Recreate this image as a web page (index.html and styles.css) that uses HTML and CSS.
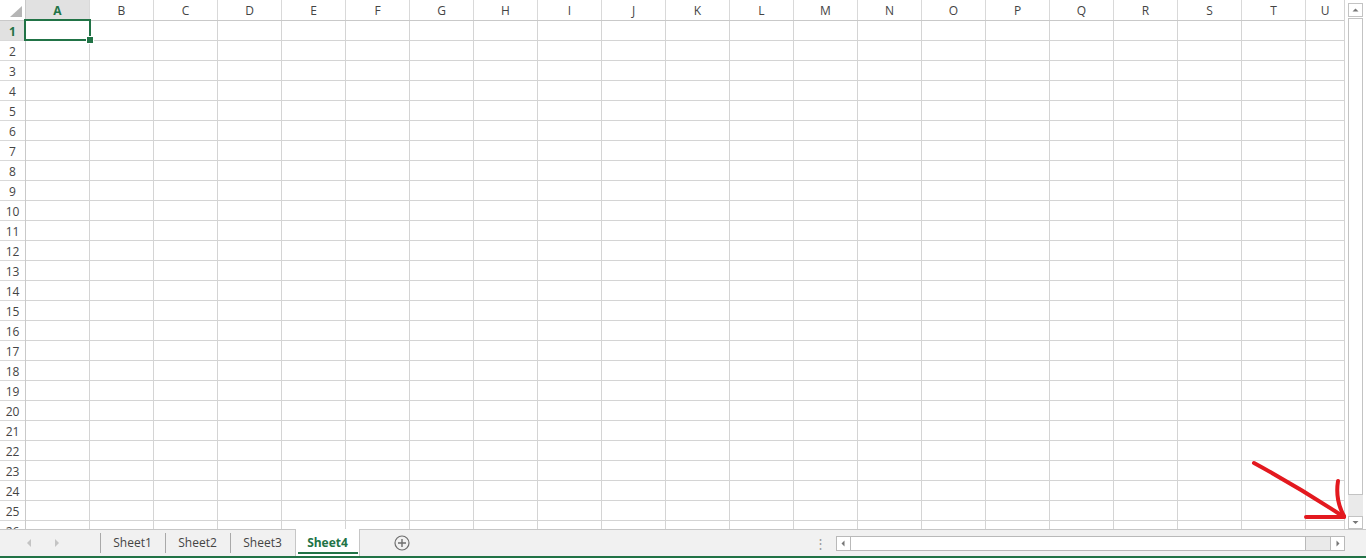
FILE: index.html
```html
<!DOCTYPE html>
<html>
<head>
<meta charset="utf-8">
<link rel="stylesheet" href="styles.css">
</head>
<body>
<div class="app">
  <div class="main">
    <div class="sheet">
      <div class="colheads">
        <div class="corner"><svg width="25" height="20" viewBox="0 0 25 20"><polygon points="10,17 22,17 22,6" fill="#b5b5b5"/></svg></div>
        <div class="ch sel">A</div><div class="ch">B</div><div class="ch">C</div><div class="ch">D</div><div class="ch">E</div>
        <div class="ch">F</div><div class="ch">G</div><div class="ch">H</div><div class="ch">I</div><div class="ch">J</div>
        <div class="ch">K</div><div class="ch">L</div><div class="ch">M</div><div class="ch">N</div><div class="ch">O</div>
        <div class="ch">P</div><div class="ch">Q</div><div class="ch">R</div><div class="ch">S</div><div class="ch">T</div>
        <div class="ch last">U</div>
      </div>
      <div class="body">
        <div class="rowheads">
          <div class="rh sel">1</div><div class="rh">2</div><div class="rh">3</div><div class="rh">4</div><div class="rh">5</div>
          <div class="rh">6</div><div class="rh">7</div><div class="rh">8</div><div class="rh">9</div><div class="rh">10</div>
          <div class="rh">11</div><div class="rh">12</div><div class="rh">13</div><div class="rh">14</div><div class="rh">15</div>
          <div class="rh">16</div><div class="rh">17</div><div class="rh">18</div><div class="rh">19</div><div class="rh">20</div>
          <div class="rh">21</div><div class="rh">22</div><div class="rh">23</div><div class="rh">24</div><div class="rh">25</div>
          <div class="rh">26</div>
        </div>
        <div class="cells">
          <div class="selbox"><span class="handle"></span></div>
        </div>
      </div>
    </div>
    <div class="vscroll">
      <div class="sbtn"><svg width="13" height="12" viewBox="0 0 13 12"><polygon points="3.5,7.5 9.5,7.5 6.5,4.5" fill="#777"/></svg></div>
      <div class="vtrack"><div class="vthumb"></div></div>
      <div class="sbtn"><svg width="13" height="11" viewBox="0 0 13 11"><polygon points="3.5,4 9.5,4 6.5,7" fill="#777"/></svg></div>
    </div>
  </div>
  <div class="tabbar">
    <div class="nav">
      <svg class="navarrow" width="6" height="8" viewBox="0 0 6 8"><polygon points="5,0 5,8 1,4" fill="#c4c4c4"/></svg>
      <svg class="navarrow" width="6" height="8" viewBox="0 0 6 8"><polygon points="1,0 1,8 5,4" fill="#c4c4c4"/></svg>
    </div>
    <div class="tab">Sheet1</div>
    <div class="tab">Sheet2</div>
    <div class="tab">Sheet3</div>
    <div class="tab active">Sheet4</div>
    <div class="addsheet"><svg width="16" height="16" viewBox="0 0 16 16"><circle cx="8" cy="8" r="7" fill="none" stroke="#6e6e6e" stroke-width="1.2"/><path d="M8 4v8M4 8h8" stroke="#6e6e6e" stroke-width="1.4"/></svg></div>
    <div class="spacer"></div>
    <div class="splitter">⋮</div>
    <div class="hscroll">
      <div class="hbtn"><svg width="13" height="13" viewBox="0 0 13 13"><polygon points="7.5,3.5 7.5,9.5 4.5,6.5" fill="#777"/></svg></div>
      <div class="hthumb"></div>
      <div class="htrack"></div>
      <div class="hbtn right"><svg width="13" height="13" viewBox="0 0 13 13"><polygon points="5.5,3.5 5.5,9.5 8.5,6.5" fill="#777"/></svg></div>
    </div>
  </div>
  <div class="statusline"></div>
  <svg class="annot" width="1366" height="558" viewBox="0 0 1366 558">
    <g fill="none" stroke="#e3191f" stroke-width="4" stroke-linecap="round">
      <path d="M1254 463 Q1300 488 1344 517"/>
      <path d="M1306 517 L1344 517"/>
      <path d="M1338 481 Q1335 500 1344 516"/>
    </g>
  </svg>
</div>
</body>
</html>
```
FILE: styles.css
```css
* { box-sizing: border-box; }
html, body { margin: 0; padding: 0; }
body {
  width: 1366px;
  height: 558px;
  overflow: hidden;
  background: #fff;
  font-family: "Open Sans", "Noto Sans", "Liberation Sans", sans-serif;
}
.app {
  position: relative;
  width: 1366px;
  height: 558px;
  display: flex;
  flex-direction: column;
}
.main {
  display: flex;
  height: 529px;
}
.sheet {
  width: 1345px;
  height: 529px;
  border-right: 1px solid #d4d4d4;
  overflow: hidden;
  display: flex;
  flex-direction: column;
}
.colheads {
  display: flex;
  height: 21px;
  flex: none;
  border-bottom: 1px solid #c9c9c9;
}
.corner {
  width: 26px;
  border-right: 1px solid #c9c9c9;
  flex: none;
}
.corner svg { display: block; }
.ch {
  width: 64px;
  flex: none;
  border-right: 1px solid #d9d9d9;
  color: #444;
  font-size: 12px;
  display: flex;
  align-items: center;
  justify-content: center;
  padding-top: 1px;
}
.ch.last { width: 38px; border-right: none; }
.ch.sel, .rh.sel {
  background: #e1e1e1;
  color: #217346;
  font-weight: 700;
}
.body {
  display: flex;
  flex: 1;
  min-height: 0;
}
.rowheads {
  width: 26px;
  flex: none;
  border-right: 1px solid #c9c9c9;
  display: flex;
  flex-direction: column;
}
.rh {
  height: 20px;
  flex: none;
  border-bottom: 1px solid #d9d9d9;
  color: #444;
  font-size: 12px;
  display: flex;
  align-items: center;
  justify-content: center;
  padding-top: 1px;
}
.cells {
  position: relative;
  flex: 1;
  background-image:
    repeating-linear-gradient(to right, transparent 0 63px, #d4d4d4 63px 64px),
    repeating-linear-gradient(to bottom, transparent 0 19px, #d4d4d4 19px 20px);
}
.selbox {
  position: absolute;
  left: -2px;
  top: -2px;
  width: 67px;
  height: 22px;
  border: 2px solid #217346;
}
.handle {
  position: absolute;
  right: -4px;
  bottom: -4px;
  width: 6px;
  height: 6px;
  background: #217346;
  border: 1px solid #fff;
  box-sizing: content-box;
  margin: -1px;
}
.vscroll {
  width: 21px;
  padding: 3px 3px 0 3px;
  display: flex;
  flex-direction: column;
}
.sbtn {
  height: 14px;
  flex: none;
  border: 1px solid #c3c3c3;
  background: #fff;
  display: flex;
  align-items: center;
  justify-content: center;
}
.sbtn + .vtrack { margin-top: 1px; }
.vtrack {
  flex: 1;
  background: #eaeaea;
  padding-bottom: 21px;
  display: flex;
  flex-direction: column;
}
.vthumb {
  flex: 1;
  background: #fff;
  border: 1px solid #c3c3c3;
}
.vscroll .sbtn:last-child { height: 13px; }
.tabbar {
  height: 27px;
  flex: none;
  border-top: 1px solid #c6c6c6;
  background: #f1f1f1;
  display: flex;
  align-items: stretch;
}
.nav {
  width: 100px;
  flex: none;
  display: flex;
  align-items: center;
  padding-left: 26px;
  gap: 22px;
}
.tab {
  width: 65px;
  flex: none;
  position: relative;
  display: flex;
  align-items: center;
  justify-content: center;
  font-size: 12px;
  color: #444;
  padding-bottom: 1px;
}
.tab::before {
  content: "";
  position: absolute;
  left: 0;
  top: 3px;
  bottom: 3px;
  width: 1px;
  background: #a9a9a9;
}
.tab.active {
  background: #fff;
  color: #217346;
  font-weight: 700;
  border-right: 1px solid #c6c6c6;
  border-left: 1px solid #c6c6c6;
  margin-top: -1px;
}
.tab.active::before { display: none; }
.tab.active::after {
  content: "";
  position: absolute;
  left: 2px;
  right: 1px;
  bottom: 2px;
  height: 2px;
  background: #217346;
}
.addsheet {
  width: 84px;
  flex: none;
  display: flex;
  align-items: center;
  padding-left: 34px;
}
.addsheet svg { display: block; }
.spacer { flex: 1; }
.splitter {
  width: 22px;
  flex: none;
  color: #9a9a9a;
  font-size: 13px;
  display: flex;
  align-items: center;
  justify-content: flex-start;
}
.hscroll {
  width: 509px;
  height: 15px;
  align-self: center;
  margin-right: 21px;
  display: flex;
  border: 1px solid #b9b9b9;
  background: #eaeaea;
}
.hbtn {
  width: 14px;
  flex: none;
  background: #fff;
  border-right: 1px solid #b9b9b9;
  display: flex;
  align-items: center;
  justify-content: center;
}
.hbtn svg { display: block; }
.hbtn.right { border-right: none; border-left: 1px solid #b9b9b9; }
.hthumb {
  width: 455px;
  flex: none;
  background: #fff;
  border-right: 1px solid #b9b9b9;
}
.htrack { flex: 1; }
.statusline {
  height: 2px;
  flex: none;
  background: #217346;
}
.annot {
  position: absolute;
  left: 0;
  top: 0;
  pointer-events: none;
}
```
